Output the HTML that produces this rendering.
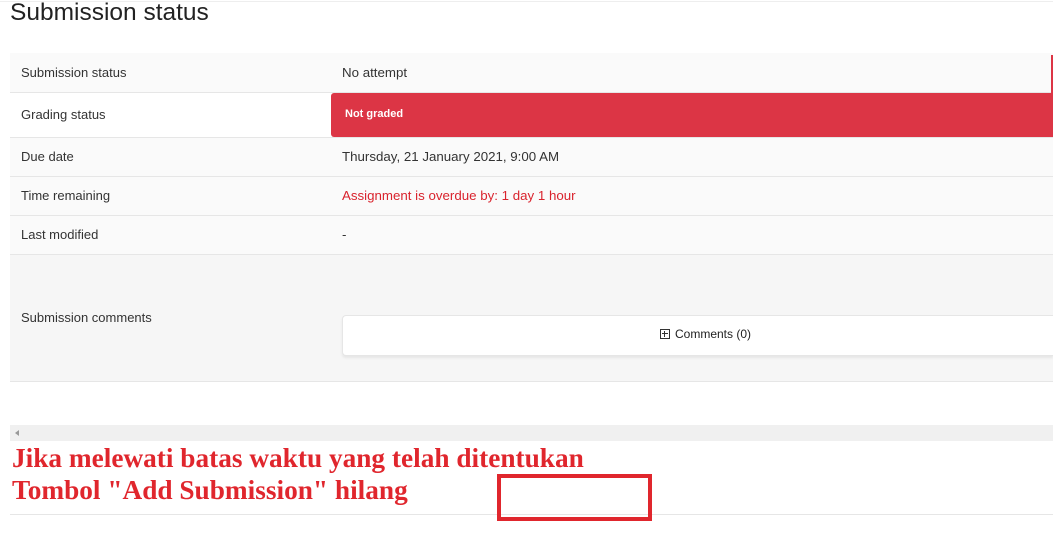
<!DOCTYPE html>
<html><head><meta charset="utf-8"><style>
*{margin:0;padding:0;box-sizing:border-box}
body{width:1053px;height:551px;background:#fff;position:relative;overflow:hidden;font-family:"Liberation Sans",sans-serif;color:#333}
.a{position:absolute}
.row{position:absolute;left:10px;width:1043px;background:#fafafa;border-bottom:1px solid #e6e6e6}
.l{position:absolute;left:11px;font-size:13px;color:#333}
.v{position:absolute;left:332px;font-size:13.3px;color:#333}
</style></head><body>
<div class="a" style="left:0;top:1px;width:1053px;height:1px;background:#eee"></div>
<div class="a" style="left:10px;top:-1px;font-size:24.5px;color:#222">Submission status</div>

<div class="row" style="top:53px;height:40px"><span class="l" style="top:12px">Submission status</span><span class="v" style="top:12px">No attempt</span></div>
<div class="a" style="left:1051px;top:55px;width:2px;height:42px;background:#dc3545"></div>
<div class="row" style="top:93px;height:45px;background:#fff"><span class="l" style="top:14px">Grading status</span></div>
<div class="a" style="left:331px;top:93px;width:722px;height:44px;background:#dc3545;border-radius:3px 0 0 3px"><span style="position:absolute;left:14px;top:15px;color:#fff;font-size:11px;font-weight:bold">Not graded</span></div>
<div class="row" style="top:138px;height:39px"><span class="l" style="top:11px">Due date</span><span class="v" style="top:11px">Thursday, 21 January 2021, 9:00 AM</span></div>
<div class="row" style="top:177px;height:39px"><span class="l" style="top:11px">Time remaining</span><span class="v" style="top:11px;color:#d9232d">Assignment is overdue by: 1 day 1 hour</span></div>
<div class="row" style="top:216px;height:39px"><span class="l" style="top:11px">Last modified</span><span class="v" style="top:11px">-</span></div>
<div class="row" style="top:255px;height:127px;background:#f6f6f6"><span class="l" style="top:55px">Submission comments</span></div>
<div class="a" style="left:342px;top:315px;width:711px;height:41px;background:#fff;border:1px solid #e6e6e6;border-right:none;border-radius:4px 0 0 4px;box-shadow:0 2px 2px #e6e6e6"></div>
<div class="a" style="left:660px;top:329px;width:10px;height:10px;border:1px solid #333"></div>
<div class="a" style="left:664px;top:331px;width:1px;height:6px;background:#333"></div>
<div class="a" style="left:662px;top:333px;width:6px;height:1px;background:#333"></div>
<div class="a" style="left:675px;top:327px;font-size:12px;color:#222">Comments (0)</div>

<div class="a" style="left:10px;top:425px;width:1043px;height:16px;background:#f0f0f0"></div>
<div class="a" style="left:15px;top:430px;width:0;height:0;border-top:3px solid transparent;border-bottom:3px solid transparent;border-right:4px solid #999"></div>
<div class="a" style="left:12px;top:442px;font-family:'Liberation Serif',serif;font-weight:bold;font-size:27.3px;line-height:32px;color:#e0262d;white-space:nowrap">Jika melewati batas waktu yang telah ditentukan<br>Tombol "Add Submission" hilang</div>
<div class="a" style="left:10px;top:514px;width:1043px;height:1px;background:#e6e6e6"></div>
<div class="a" style="left:497px;top:474px;width:155px;height:47px;border:4px solid #e0262d"></div>
</body></html>
